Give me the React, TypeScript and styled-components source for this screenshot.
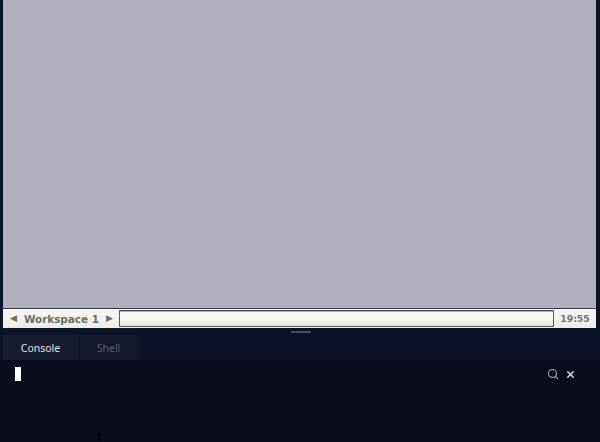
import styled, { createGlobalStyle } from 'styled-components';
import { Search, X } from 'lucide-react';

const GlobalStyle = createGlobalStyle`
  html,
  body {
    margin: 0;
    padding: 0;
    height: 100%;
    overflow: hidden;
    background-color: #0c1326;
  }
  #root {
    height: 100%;
  }
`;

const App = () => (
  <>
    <GlobalStyle />
    <Page>
      <Display>
        <Desktop />
        <TaskBar>
          <Pager>
            <Arrow>◀</Arrow>
            <WorkspaceName>Workspace 1</WorkspaceName>
            <Arrow>▶</Arrow>
          </Pager>
          <WindowList />
          <Clock>19:55</Clock>
        </TaskBar>
      </Display>
      <Sash>
        <SashHandle />
      </Sash>
      <Tabs>
        <Tab $active>Console</Tab>
        <Tab>Shell</Tab>
      </Tabs>
      <Terminal>
        <Cursor />
        <TerminalActions>
          <Search size={12} strokeWidth={2.2} color="#a9abb8" />
          <X size={11} strokeWidth={3.2} color="#d8d9e0" />
        </TerminalActions>
        <MousePointer width="7" height="10" viewBox="0 0 7 10">
          <path d="M1 .5h5M3.5.5v9" stroke="#000" strokeWidth="1" fill="none" />
        </MousePointer>
      </Terminal>
    </Page>
  </>
);

export default App;

const Page = styled.div`
  position: relative;
  display: flex;
  flex-direction: column;
  width: 600px;
  height: 442px;
  overflow: hidden;
  font-family: 'Noto Sans', sans-serif;
  background-color: #0c1326;
`;

const Display = styled.div`
  display: flex;
  flex-direction: column;
  height: 328px;
  padding: 0 4px 0 3px;
`;

const Desktop = styled.div`
  flex: 1;
  background-color: #b1b0be;
`;

const TaskBar = styled.div`
  display: flex;
  align-items: stretch;
  height: 20px;
  box-sizing: border-box;
  border-top: 1px solid #3c3c40;
  background: linear-gradient(#f6f5f2, #eeece8);
`;

const Pager = styled.div`
  display: flex;
  align-items: center;
  gap: 6px;
  width: 115px;
  padding-left: 7px;
  box-sizing: border-box;
  color: #6e6d6b;
`;

const Arrow = styled.span`
  font-family: 'DejaVu Sans', sans-serif;
  font-size: 9px;
  line-height: 1;
`;

const WorkspaceName = styled.span`
  margin: 0 1px;
  font-family: 'DejaVu Sans', sans-serif;
  font-size: 10.4px;
  font-weight: 700;
  white-space: nowrap;
`;

const WindowList = styled.div`
  flex: 1;
  margin: 1px 0 0 1px;
  height: 17px;
  box-sizing: border-box;
  border: 1px solid #5a5a5c;
  border-top-color: #4a4a4c;
  border-radius: 1px;
  box-shadow: inset 0 1px 0 #a8a8a6;
  background: linear-gradient(#f7f6f3 55%, #e4e1dc);
`;

const Clock = styled.div`
  display: flex;
  align-items: center;
  justify-content: center;
  width: 42px;
  font-family: 'DejaVu Sans', sans-serif;
  font-size: 9.3px;
  font-weight: 700;
  color: #737270;
`;

const Sash = styled.div`
  display: flex;
  justify-content: center;
  height: 7px;
  padding-top: 3px;
  box-sizing: border-box;
  background-color: #0c1326;
`;

const SashHandle = styled.div`
  width: 20px;
  height: 2px;
  margin-left: 2px;
  background-color: #4a4d60;
`;

const Tabs = styled.div`
  display: flex;
  height: 25px;
  padding-left: 3px;
`;

const Tab = styled.div<{ $active?: boolean }>`
  display: flex;
  align-items: center;
  justify-content: center;
  width: ${({ $active }) => ($active ? '75px' : '61px')};
  font-size: 10.5px;
  color: ${({ $active }) => ($active ? '#e2e3e8' : '#5d6070')};
  background-color: ${({ $active }) => ($active ? '#171c2e' : '#12172a')};
`;

const Terminal = styled.div`
  flex: 1;
  display: flex;
  justify-content: space-between;
  align-items: flex-start;
  padding: 7px 24px 0 15px;
  background-color: #0b0d1a;
`;

const Cursor = styled.div`
  width: 6px;
  height: 14px;
  background-color: #ffffff;
`;

const TerminalActions = styled.div`
  display: flex;
  align-items: center;
  gap: 6px;
  height: 14px;
`;

const MousePointer = styled.svg`
  position: absolute;
  left: 96px;
  top: 433px;
`;
